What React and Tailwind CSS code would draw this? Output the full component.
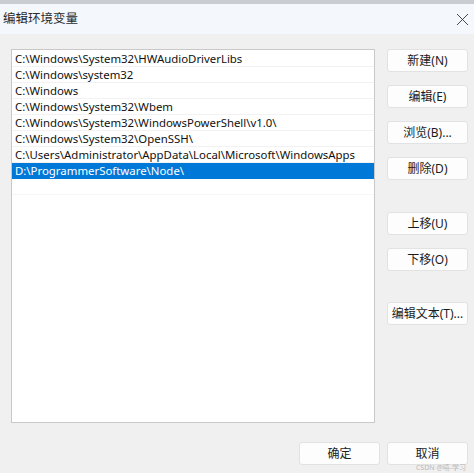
import React from "react";

const rows = [
  "C:\\Windows\\System32\\HWAudioDriverLibs",
  "C:\\Windows\\system32",
  "C:\\Windows",
  "C:\\Windows\\System32\\Wbem",
  "C:\\Windows\\System32\\WindowsPowerShell\\v1.0\\",
  "C:\\Windows\\System32\\OpenSSH\\",
  "C:\\Users\\Administrator\\AppData\\Local\\Microsoft\\WindowsApps",
  "D:\\ProgrammerSoftware\\Node\\",
];

function Btn({ children, className = "" }) {
  return (
    <div
      className={
        "w-[81px] h-[23px] flex items-center justify-center bg-[#fdfdfd] border border-[#e2e2e2] rounded-[3px] text-[12px] text-[#1b1b1b] " +
        className
      }
    >
      {children}
    </div>
  );
}

export default function App() {
  return (
    <div
      className="w-[474px] h-[473px] bg-[#f0f0f0] flex flex-col overflow-hidden"
      style={{ fontFamily: '"Noto Sans", "Noto Sans CJK SC", sans-serif' }}
    >
      <div className="h-[4px] bg-[#c9ccd0]" />
      <div className="h-[30px] bg-[#f4f7fc] flex items-center justify-between pl-[3px] pr-[4px]">
        <span className="text-[12.5px] text-[#2a2a2a]">编辑环境变量</span>
        <svg width="13" height="13" viewBox="0 0 13 13" className="mr-[1px]">
          <path d="M1 1 L12 12 M12 1 L1 12" stroke="#333" strokeWidth="0.9" fill="none" />
        </svg>
      </div>
      <div className="flex pl-[11px] pt-[15px]">
        <div className="w-[364px] h-[374px] bg-white border border-[#c8c8c8] pt-[1px] flex flex-col">
          {rows.map((r, i) => (
            <div
              key={i}
              className={
                "h-[16px] flex items-center pl-[3px] text-[11.4px] leading-[16px] whitespace-nowrap border-b " +
                (i === 7
                  ? "bg-[#0078d7] text-white border-[#0078d7]"
                  : "text-[#111] border-[#f2f2f2]")
              }
            >
              {r}
            </div>
          ))}
          <div className="h-[16px] border-b border-[#f6f6f6]" />
          <div className="h-[16px]" />
        </div>
        <div className="flex flex-col ml-[12px]">
          <Btn>新建(N)</Btn>
          <Btn className="mt-[13px]">编辑(E)</Btn>
          <Btn className="mt-[13px]">浏览(B)...</Btn>
          <Btn className="mt-[13px]">删除(D)</Btn>
          <Btn className="mt-[32px]">上移(U)</Btn>
          <Btn className="mt-[13px]">下移(O)</Btn>
          <Btn className="mt-[31px]">编辑文本(T)...</Btn>
        </div>
      </div>
      <div className="flex justify-end pr-[6px] mt-[19px] gap-[7px]">
        <Btn className="w-[80px] border-[#4f9ad8] h-[23px] bg-[#fdfdfd]">确定</Btn>
        <div className="relative">
          <Btn className="w-[80px]">取消</Btn>
          <span className="absolute right-[2px] top-[22px] text-[7px] leading-[8px] text-[#b8b8b8] whitespace-nowrap">
            CSDN @嘻-学习
          </span>
        </div>
      </div>
    </div>
  );
}
